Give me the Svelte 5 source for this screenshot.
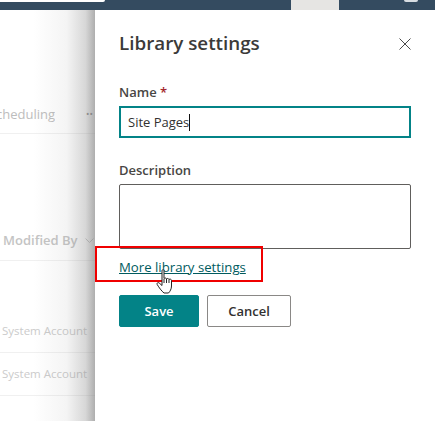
<script>
	let name = $state('Site Pages');
	const rows = ['System Account', 'System Account'];
</script>

<div class="page">
	<header class="topbar">
		<div class="search"></div>
		<div class="tile"></div>
		<div class="avatar"></div>
	</header>

	<div class="body">
		<div class="list" aria-hidden="true">
			<div class="commands">
				<span class="clip"><span class="cmd">Scheduling</span></span>
				<span class="dots">••</span>
			</div>
			<div class="head">
				<span>Modified By</span>
				<svg width="9" height="9" viewBox="0 0 9 9"><path d="M0.5 2.5 L4.5 6.5 L8.5 2.5" fill="none" stroke="#c8c8c8" /></svg>
			</div>
			<div class="rows">
				{#each rows as row}
					<div class="row">{row}</div>
				{/each}
			</div>
		</div>

		<aside class="panel">
			<div class="title-row">
				<h1>Library settings</h1>
				<button class="close" aria-label="Close">
					<svg width="12" height="12" viewBox="0 0 12 12"><path d="M0.5 0.5 L11.5 11.5 M11.5 0.5 L0.5 11.5" fill="none" stroke="#4a4a4a" /></svg>
				</button>
			</div>

			<label class="label" for="lib-name">Name <span class="req">*</span></label>
			<div class="input">
				<span id="lib-name">{name}</span><span class="caret"></span>
			</div>

			<label class="label desc" for="lib-desc">Description</label>
			<textarea id="lib-desc" class="area"></textarea>

			<div class="link-row">
				<a href="#more" class="link">More library settings</a>
			</div>

			<div class="actions">
				<button class="btn primary">Save</button>
				<button class="btn">Cancel</button>
			</div>

			<!-- annotation drawn on top of the screenshot -->
			<div class="highlight"></div>
			<svg class="cursor" width="20" height="26" viewBox="0 0 20 26">
				<path
					d="M6 1.5 C6 0.5 8 0.5 8 1.5 L8 9.5 C9 8.8 10 8.8 10.5 9.8 C11.5 9.2 12.5 9.4 13 10.4 C14 9.8 15.5 10.2 15.5 11.5 L15.5 17 C15.5 20 14 22.5 12.5 24 L8 24 C5.5 22 3 18.5 1.2 15.5 C0.5 14 2 13 3.2 14 L6 16.5 Z"
					fill="#fff"
					stroke="#222"
					stroke-width="1"
				/>
				<path d="M8 10 V14 M10.5 10 V14 M13 10.5 V14" stroke="#222" stroke-width="1" fill="none" />
			</svg>
		</aside>
	</div>
</div>

<style>
	:global(body) {
		margin: 0;
		background: #fff;
	}

	.page {
		width: 435px;
		height: 421px;
		overflow: hidden;
		display: flex;
		flex-direction: column;
		font-family: 'Open Sans', 'Noto Sans', sans-serif;
		color: #323130;
	}

	.topbar {
		height: 10px;
		flex: none;
		background: #344b60;
		display: flex;
		align-items: flex-start;
	}

	.search {
		width: 105px;
		height: 2px;
		background: #fff;
		border-radius: 0 0 3px 0;
	}

	.tile {
		width: 48px;
		height: 10px;
		margin-left: 186px;
		background: #e6e5e3;
	}

	.avatar {
		width: 14px;
		height: 2px;
		margin-left: 65px;
		background: #d8dde2;
		border-radius: 0 0 7px 7px;
	}

	.body {
		flex: 1;
		display: flex;
		min-height: 0;
	}

	.list {
		width: 95px;
		flex: none;
		position: relative;
		overflow: hidden;
		color: #c4c4c4;
	}

	/* panel shadow falling over the list */
	.list::after {
		content: '';
		position: absolute;
		inset: 0;
		background: linear-gradient(
			to right,
			rgba(150, 150, 150, 0) 35%,
			rgba(150, 150, 150, 0.1) 70%,
			rgba(140, 140, 140, 0.35) 90%,
			rgba(120, 120, 120, 0.6) 100%
		);
	}

	.commands {
		height: 124px;
		box-sizing: border-box;
		padding-top: 95px;
		border-bottom: 1px solid #f0f0f0;
		display: flex;
		align-items: flex-start;
		font-size: 13px;
		line-height: 18px;
		color: #bdbdbd;
	}

	.clip {
		width: 55px;
		overflow: hidden;
		display: flex;
		justify-content: flex-end;
		flex: none;
	}

	.cmd {
		white-space: nowrap;
	}

	.dots {
		margin-left: 31px;
		font-size: 9px;
		letter-spacing: 0;
		color: #8f8f8f;
	}

	.head {
		height: 127px;
		box-sizing: border-box;
		padding: 97px 0 0 3px;
		border-bottom: 1px solid #f0f0f0;
		display: flex;
		gap: 8px;
		font-size: 13px;
		font-weight: 600;
		line-height: 18px;
		color: #c4c4c4;
		white-space: nowrap;
	}

	.head svg {
		margin-top: 5px;
		flex: none;
	}

	.rows {
		padding-top: 49px;
	}

	.row {
		height: 43px;
		box-sizing: border-box;
		padding: 13px 0 0 2px;
		border-bottom: 1px solid #f0f0f0;
		font-size: 11.5px;
		line-height: 16px;
		white-space: nowrap;
		color: #cbcbcb;
	}

	.panel {
		flex: 1;
		position: relative;
		background: #fff;
		padding: 0 24px;
		box-sizing: border-box;
	}

	.title-row {
		height: 62px;
		display: flex;
		justify-content: space-between;
		align-items: flex-start;
	}

	h1 {
		margin: 19px 0 0;
		font-size: 18.8px;
		line-height: 28px;
		font-weight: 600;
		color: #3b3a39;
	}

	.close {
		border: none;
		background: none;
		padding: 0;
		margin: 28px 0 0;
		width: 12px;
		height: 12px;
		display: flex;
	}

	.label {
		display: block;
		font-size: 13px;
		line-height: 20px;
		font-weight: 600;
		margin-top: 10px;
		height: 24px;
		color: #484644;
	}

	.req {
		color: #a4262c;
	}

	.input {
		height: 32px;
		width: 292px;
		box-sizing: border-box;
		border: 2px solid #038387;
		padding-left: 7px;
		display: flex;
		align-items: center;
		font-size: 13px;
		color: #323130;
	}

	.caret {
		width: 1px;
		height: 17px;
		background: #111;
	}

	.label.desc {
		margin-top: 22px;
	}

	.area {
		display: block;
		width: 292px;
		height: 65px;
		box-sizing: border-box;
		border: 1px solid #605e5c;
		border-radius: 2px;
		padding: 0;
		margin: 0;
		resize: none;
		outline: none;
	}

	.link-row {
		height: 46px;
		padding-top: 8px;
		box-sizing: border-box;
		font-size: 13.2px;
		line-height: 20px;
	}

	.link {
		color: #005b5e;
		text-decoration: underline;
	}

	.actions {
		display: flex;
		gap: 8px;
	}

	.btn {
		height: 32px;
		width: 84px;
		box-sizing: border-box;
		border: 1px solid #8a8886;
		border-radius: 2px;
		background: #fff;
		color: #323130;
		font-family: inherit;
		font-size: 13px;
		font-weight: 560;
		padding: 0;
	}

	.btn.primary {
		width: 80px;
		background: #038387;
		border-color: #038387;
		color: #fff;
	}

	.highlight {
		position: absolute;
		left: 0;
		top: 236px;
		width: 168px;
		height: 36px;
		box-sizing: border-box;
		border: 2px solid #f00000;
		pointer-events: none;
	}

	.cursor {
		position: absolute;
		left: 61px;
		top: 259px;
		pointer-events: none;
	}
</style>
